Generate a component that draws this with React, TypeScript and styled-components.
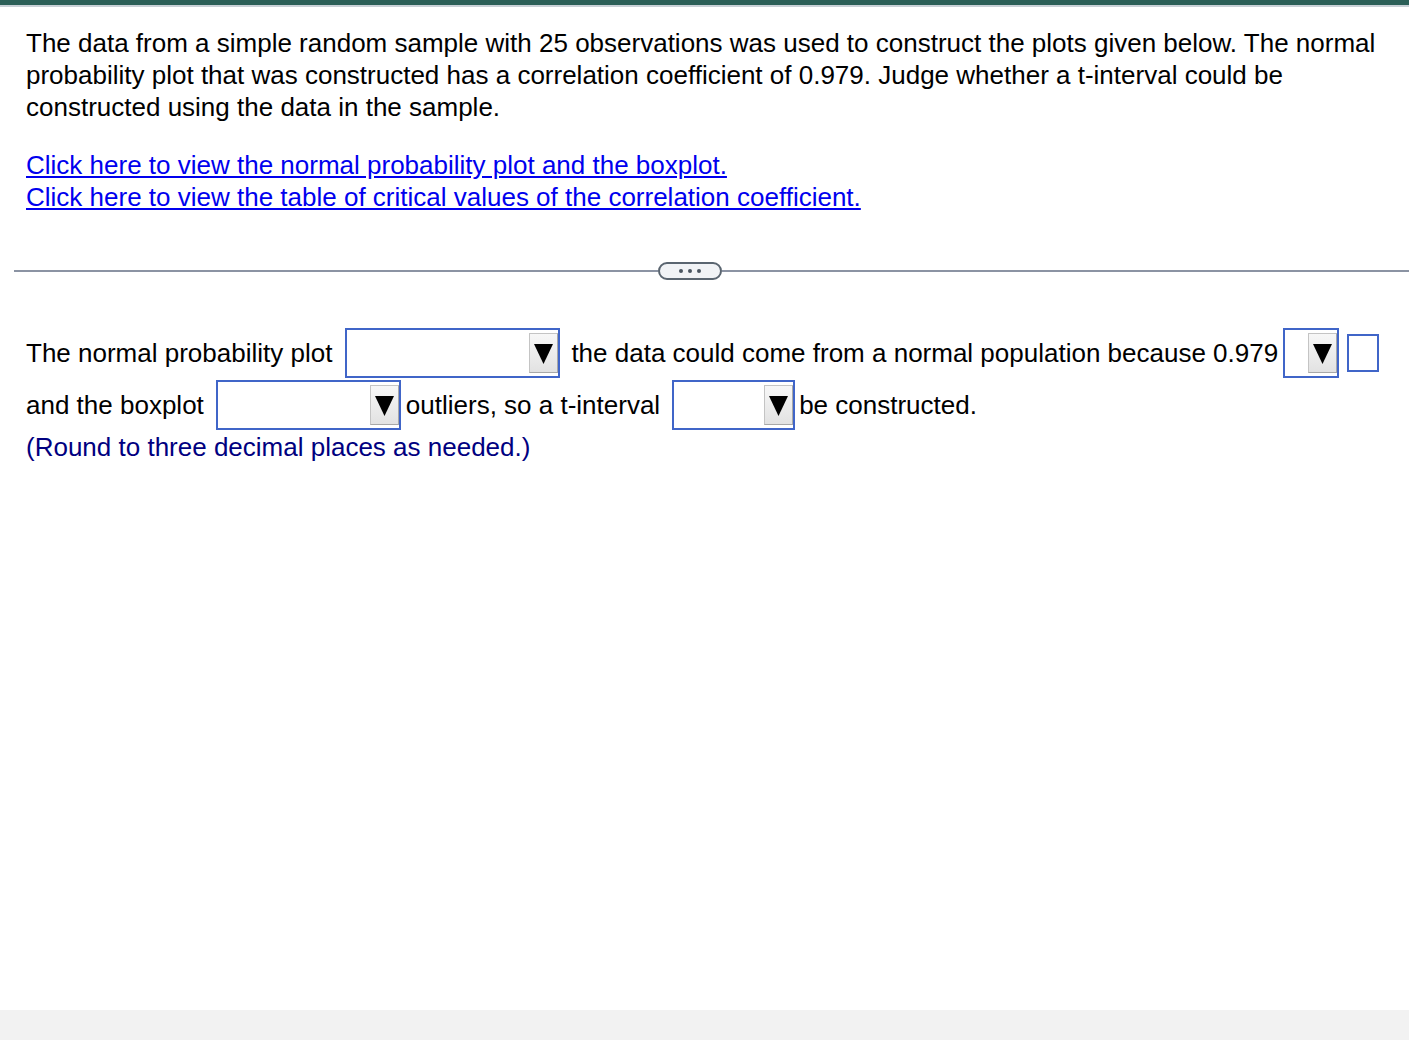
import styled, { createGlobalStyle } from 'styled-components';

const GlobalStyle = createGlobalStyle`
  html, body {
    margin: 0;
    padding: 0;
    background: #fff;
  }
  body {
    font-family: "Liberation Sans", Arial, Helvetica, sans-serif;
    color: #000;
  }
`;

const Page = styled.div`
  min-height: 100vh;
  display: flex;
  flex-direction: column;
`;

const TopBar = styled.div`
  height: 5px;
  background: #2b5f57;
  border-bottom: 2px solid #c8d0d6;
`;

const Main = styled.div`
  flex: 1;
  padding: 20px 0 0;
`;

const Question = styled.div`
  padding: 0 26px;
  font-size: 26px;
  line-height: 32px;
`;

const Para = styled.p`
  margin: 0;
`;

const Links = styled.div`
  margin-top: 26px;
  display: flex;
  flex-direction: column;
  align-items: flex-start;
`;

const Link = styled.a`
  color: #0000ee;
  text-decoration: underline;
  cursor: pointer;
`;

const Divider = styled.div`
  margin: 49px 0 0 14px;
  display: flex;
  align-items: center;
`;

const Line = styled.div<{ $width?: number }>`
  height: 2px;
  background: #8b93a3;
  ${(p) => (p.$width ? `width: ${p.$width}px;` : 'flex: 1;')}
`;

const MoreButton = styled.button`
  width: 64px;
  height: 18px;
  padding: 0;
  border: 2px solid #5a6570;
  border-radius: 9px;
  background: #f1f3f6;
  display: flex;
  align-items: center;
  justify-content: center;
  gap: 5px;
  cursor: pointer;
`;

const Dot = styled.span`
  width: 4px;
  height: 4px;
  border-radius: 50%;
  background: #4a5560;
`;

const Answer = styled.div`
  margin-top: 48px;
  padding: 0 26px;
  font-size: 26px;
`;

const Rows = styled.div`
  display: flex;
  flex-direction: column;
  gap: 2px;
`;

const Row = styled.div`
  display: flex;
  align-items: center;
  height: 50px;
  white-space: nowrap;
`;

const Text = styled.span``;

const SelectBox = styled.div<{ $width: number; $ml: number; $mr: number }>`
  box-sizing: border-box;
  width: ${(p) => p.$width}px;
  height: 50px;
  margin: 0 ${(p) => p.$mr}px 0 ${(p) => p.$ml}px;
  border: 2px solid #4065c8;
  background: #fff;
  display: flex;
  align-items: flex-start;
  justify-content: flex-end;
  padding: 3px 0 0;
`;

const ArrowButton = styled.div`
  box-sizing: border-box;
  width: 29px;
  height: 40px;
  border: 1px solid #c4c4c4;
  border-right-color: #a8a8a8;
  border-bottom-color: #a8a8a8;
  background: linear-gradient(#f7f7f7, #e2e2e2);
  display: flex;
  align-items: center;
  justify-content: center;
`;

const AnswerBox = styled.div`
  box-sizing: border-box;
  width: 32px;
  height: 38px;
  margin-left: 8px;
  border: 2px solid #4065c8;
  background: #fff;
`;

const Note = styled.div`
  margin-top: 1px;
  color: #000080;
  line-height: 32px;
`;

const Footer = styled.div`
  height: 30px;
  background: #f2f2f2;
`;

function Select({ width, ml = 6, mr = 6 }: { width: number; ml?: number; mr?: number }) {
  return (
    <SelectBox $width={width} $ml={ml} $mr={mr}>
      <ArrowButton>
        <svg width="19" height="21" viewBox="0 0 19 21">
          <polygon points="0,1 19,1 9.5,21" fill="#000" />
        </svg>
      </ArrowButton>
    </SelectBox>
  );
}

export default function App() {
  return (
    <Page>
      <GlobalStyle />
      <TopBar />
      <Main>
        <Question>
          <Para>
            The data from a simple random sample with 25 observations was used to construct the plots given below. The
            normal probability plot that was constructed has a correlation coefficient of 0.979. Judge whether a
            t-interval could be constructed using the data in the sample.
          </Para>
          <Links>
            <Link>Click here to view the normal probability plot and the boxplot.</Link>
            <Link>Click here to view the table of critical values of the correlation coefficient.</Link>
          </Links>
        </Question>
        <Divider>
          <Line $width={644} />
          <MoreButton aria-label="more">
            <Dot />
            <Dot />
            <Dot />
          </MoreButton>
          <Line />
        </Divider>
        <Answer>
          <Rows>
            <Row>
              <Text>The normal probability plot</Text>
              <Select width={215} ml={13} mr={11} />
              <Text>the data could come from a normal population because 0.979</Text>
              <Select width={56} ml={5} mr={0} />
              <AnswerBox />
            </Row>
            <Row>
              <Text>and the boxplot</Text>
              <Select width={185} ml={12} mr={5} />
              <Text>outliers, so a t-interval</Text>
              <Select width={123} ml={12} mr={4} />
              <Text>be constructed.</Text>
            </Row>
          </Rows>
          <Note>(Round to three decimal places as needed.)</Note>
        </Answer>
      </Main>
      <Footer />
    </Page>
  );
}
